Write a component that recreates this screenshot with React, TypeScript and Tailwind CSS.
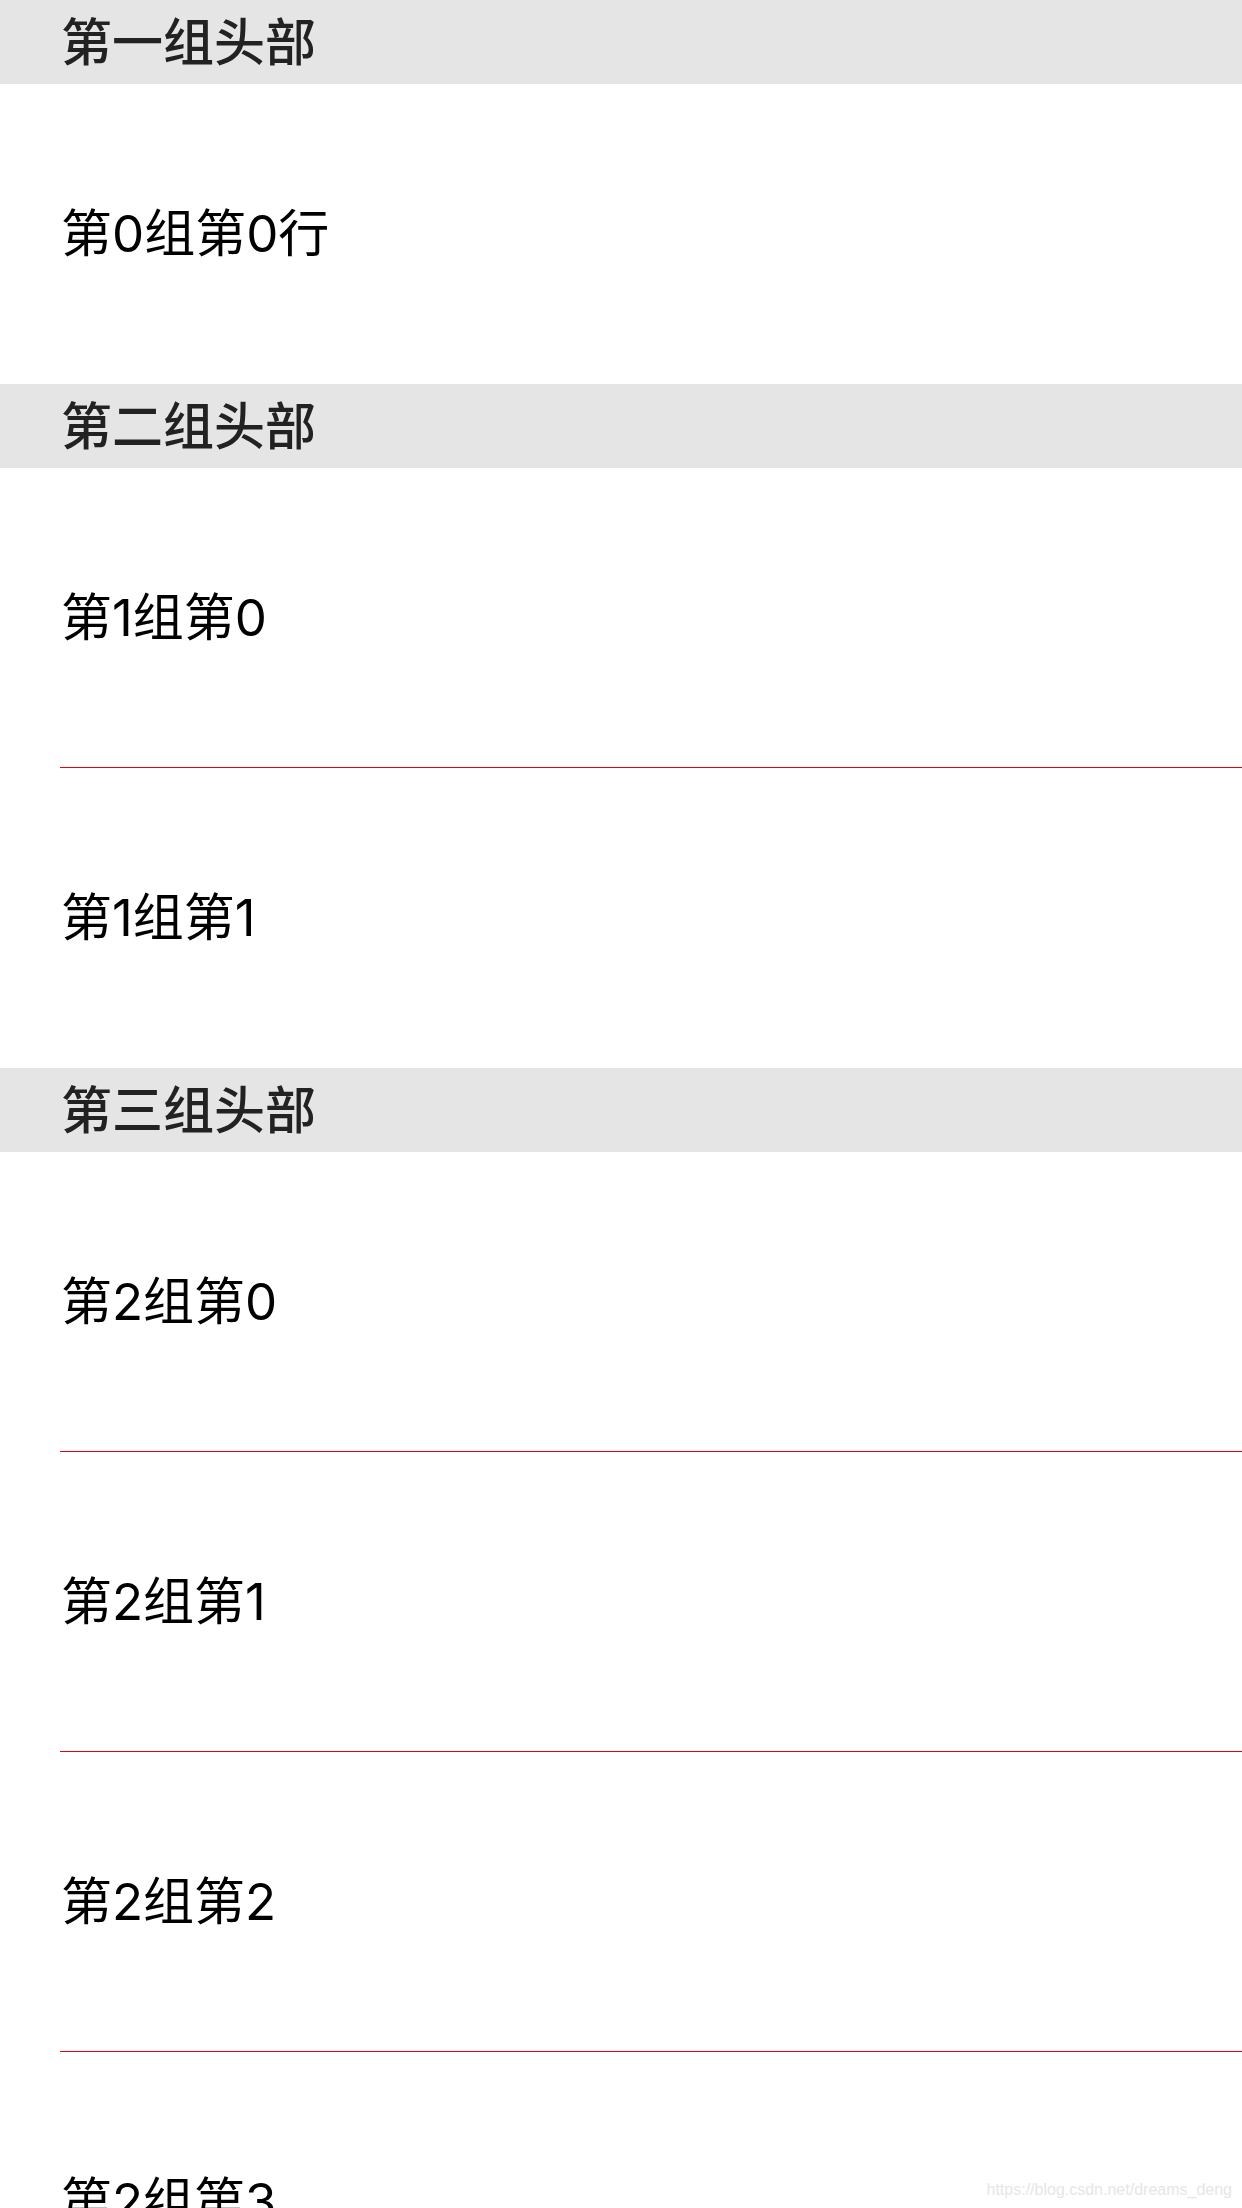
import type { ReactNode } from "react";

const sections = [
  { title: "第一组头部", rows: ["第0组第0行"] },
  { title: "第二组头部", rows: ["第1组第0", "第1组第1"] },
  { title: "第三组头部", rows: ["第2组第0", "第2组第1", "第2组第2", "第2组第3"] },
];

function SectionHeader({ children }: { children: ReactNode }) {
  return (
    <div className="h-[84px] bg-[#e5e5e5] flex items-center pl-[61px]">
      <span className="text-[51px] leading-none font-medium text-[#222222]">{children}</span>
    </div>
  );
}

function Row({ label, last }: { label: string; last: boolean }) {
  return (
    <div className="h-[300px] flex flex-col">
      <div className="flex-1 flex items-center pl-[61px]">
        <span className="text-[51px] leading-none text-black">{label}</span>
      </div>
      <div className={last ? "h-px" : "h-px ml-[60px] bg-[#e60012]"} />
    </div>
  );
}

export default function App() {
  return (
    <div
      className="relative w-[1242px] h-[2208px] overflow-hidden bg-white"
      style={{ fontFamily: "Inter, 'Noto Sans CJK SC', sans-serif" }}
    >
      {sections.map((s) => (
        <div key={s.title}>
          <SectionHeader>{s.title}</SectionHeader>
          {s.rows.map((r, i) => (
            <Row key={r} label={r} last={i === s.rows.length - 1} />
          ))}
        </div>
      ))}
      <span
        className="absolute right-[10px] bottom-[10px] text-[16px] leading-none text-[#e6e6e6]"
        style={{ fontFamily: "'Liberation Sans', sans-serif" }}
      >
        https://blog.csdn.net/dreams_deng
      </span>
    </div>
  );
}
